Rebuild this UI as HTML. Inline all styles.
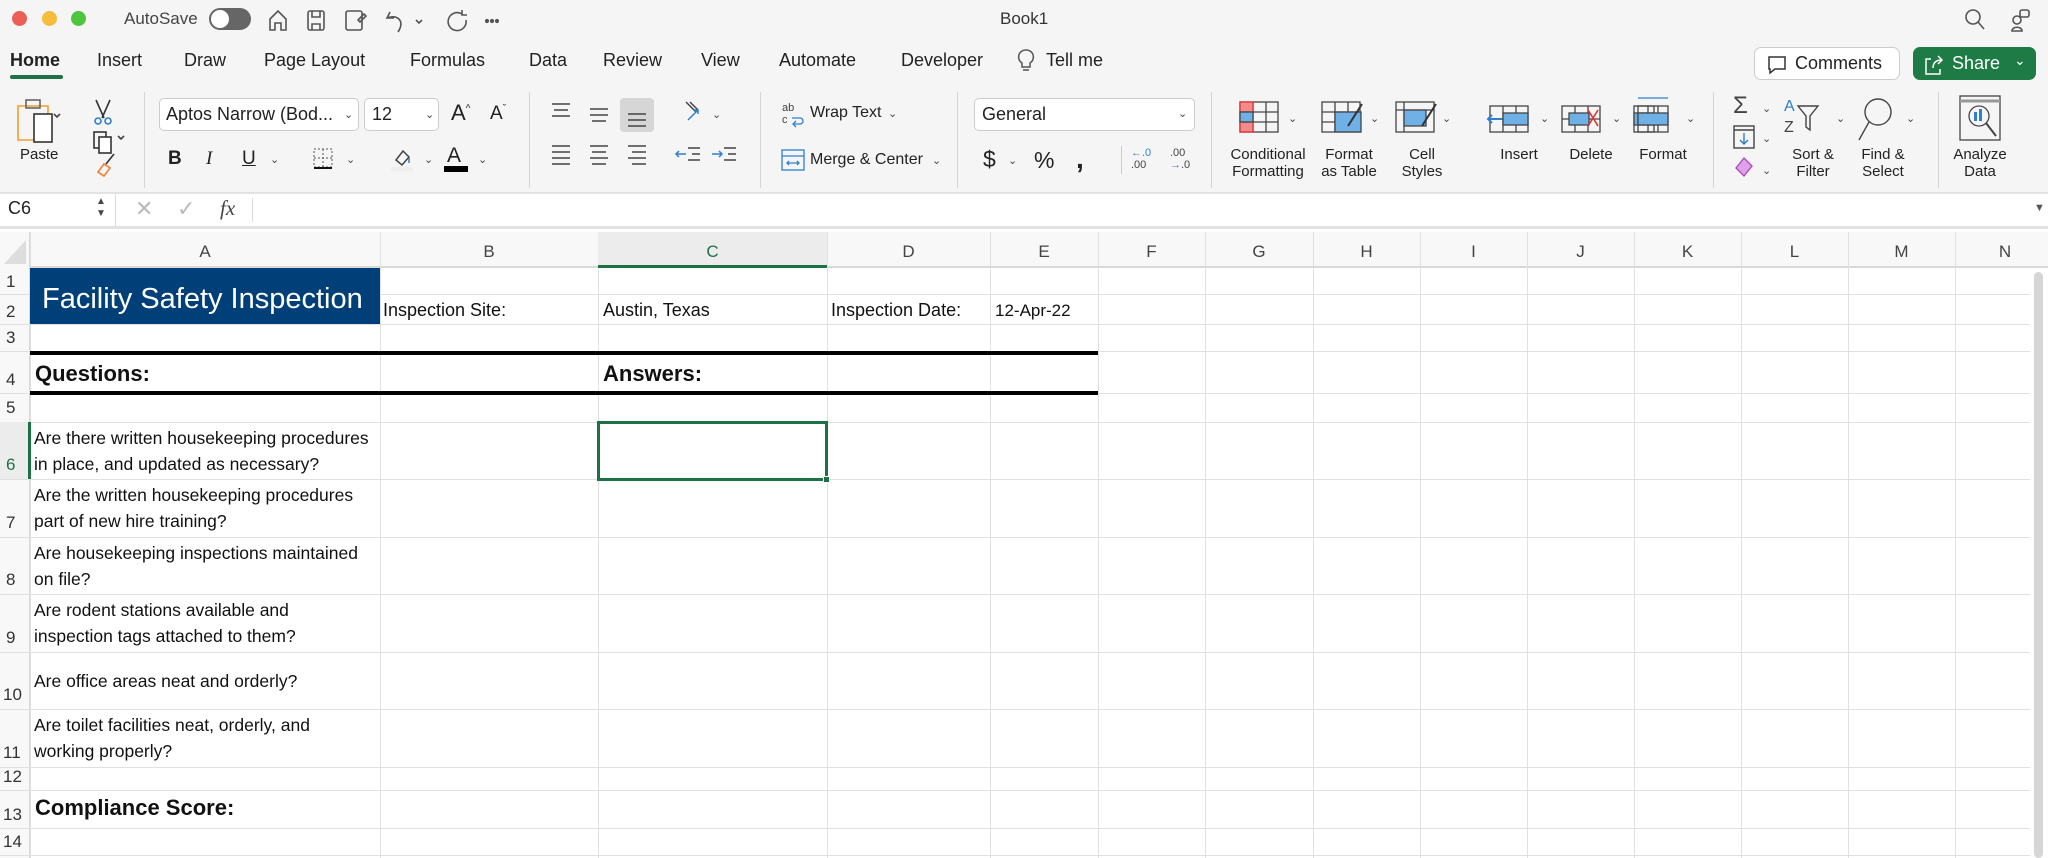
<!DOCTYPE html>
<html><head><meta charset="utf-8">
<style>
*{box-sizing:border-box;margin:0;padding:0}
body{width:2048px;height:858px;overflow:hidden;background:#f5f5f5;font-family:"Liberation Sans",sans-serif;color:#222;position:relative}
.a{position:absolute;white-space:nowrap}
.n{font-family:"Liberation Sans Narrow","Liberation Sans",sans-serif}
.t{font-size:17px;color:#222}
.lbl{font-size:15px;text-align:center;line-height:17px;color:#222}
.sep{position:absolute;width:1px;background:#d4d4d4;top:92px;height:96px}
.cv{font-size:11px;color:#444}
.gl{position:absolute;background:#e0e0e0}
.cell{position:absolute;font-size:18px;color:#111;white-space:nowrap}
.rh{position:absolute;left:6px;font-size:17px;color:#333}
.ch{position:absolute;top:242px;font-size:17px;color:#444;text-align:center}
</style></head><body>
<div class="a" style="left:12px;top:11px;width:15px;height:15px;border-radius:50%;background:#ec5f57"></div>
<div class="a" style="left:42px;top:11px;width:15px;height:15px;border-radius:50%;background:#f4bd3c"></div>
<div class="a" style="left:71px;top:11px;width:15px;height:15px;border-radius:50%;background:#4fc43f"></div>
<div class="a t" style="left:124px;top:9px;font-size:17px;color:#444">AutoSave</div>
<div class="a" style="left:209px;top:8px;width:42px;height:22px;border-radius:11px;background:#666"><div style="position:absolute;left:2px;top:2px;width:18px;height:18px;border-radius:50%;background:#fff"></div></div>
<svg class="a" style="left:266px;top:6px" width="250" height="28" fill="none" stroke="#555" stroke-width="1.6">
<path d="M4 13 L12 5 L20 13 V24 H15 V17 H9 V24 H4 Z"/>
<rect x="42" y="5" width="16" height="19" rx="2"/><path d="M46 5v6h8V5 M46 24v-6h8v6"/>
<rect x="80" y="5" width="16" height="19" rx="2"/><path d="M92 14l6-6 2 2-6 6z"/>
<path d="M124 6 L121 12 L128 12 M121 12 C130 8 140 14 132 26"/><path d="M150 14l3 3 3-3"/>
<path d="M196 8 A9 9 0 1 0 200 14 M196 4v5h5"/>
<circle cx="221" cy="15" r="1.3" fill="#555"/><circle cx="226" cy="15" r="1.3" fill="#555"/><circle cx="231" cy="15" r="1.3" fill="#555"/>
</svg>
<div class="a" style="left:1000px;top:9px;font-size:17px;color:#333">Book1</div>
<svg class="a" style="left:1962px;top:6px" width="80" height="28" fill="none" stroke="#555" stroke-width="1.6"><circle cx="11" cy="11" r="7"/><path d="M16 16l6 7"/><circle cx="55" cy="14" r="4"/><path d="M50 25c0-5 10-5 10 0z"/><rect x="58" y="4" width="9" height="7" rx="2"/></svg>
<div class="a" style="top:50px;left:10px;font-size:18px;font-weight:bold;color:#222">Home</div>
<div class="a" style="left:10px;top:75px;width:53px;height:4px;border-radius:2px;background:#1e7145"></div>
<div class="a" style="top:50px;left:97px;font-size:18px">Insert</div>
<div class="a" style="top:50px;left:184px;font-size:18px">Draw</div>
<div class="a" style="top:50px;left:264px;font-size:18px">Page Layout</div>
<div class="a" style="top:50px;left:410px;font-size:18px">Formulas</div>
<div class="a" style="top:50px;left:529px;font-size:18px">Data</div>
<div class="a" style="top:50px;left:603px;font-size:18px">Review</div>
<div class="a" style="top:50px;left:701px;font-size:18px">View</div>
<div class="a" style="top:50px;left:779px;font-size:18px">Automate</div>
<div class="a" style="top:50px;left:901px;font-size:18px">Developer</div>
<svg class="a" style="left:1016px;top:48px" width="20" height="26" fill="none" stroke="#555" stroke-width="1.5"><path d="M10 2a7 7 0 0 0-4 13v4h8v-4a7 7 0 0 0-4-13z M7 22h6"/></svg>
<div class="a" style="top:50px;left:1046px;font-size:18px">Tell me</div>
<div class="a" style="left:1754px;top:47px;width:146px;height:33px;border:1px solid #ccc;border-radius:7px;background:#fff"></div>
<svg class="a" style="left:1766px;top:54px" width="22" height="22" fill="none" stroke="#333" stroke-width="1.5"><path d="M3 3h16v12H9l-5 4v-4H3z"/></svg>
<div class="a" style="left:1795px;top:53px;font-size:18px;color:#222">Comments</div>
<div class="a" style="left:1913px;top:47px;width:123px;height:33px;border-radius:7px;background:#1e7b45"></div>
<svg class="a" style="left:1923px;top:54px" width="22" height="22" fill="none" stroke="#fff" stroke-width="1.5"><path d="M8 5H3v15h14v-5 M10 14c0-6 4-8 9-8 M15 2l4 4-4 4"/></svg>
<div class="a" style="left:1952px;top:53px;font-size:18px;color:#fff">Share</div>
<div class="a" style="left:2014px;top:52px;font-size:14px;color:#fff">&#8964;</div>
<svg class="a" style="left:14px;top:96px" width="120" height="82" fill="none" stroke-width="1.6">
<path d="M4 10h30v34H4z" stroke="#f0a030"/><rect x="12" y="4" width="14" height="8" stroke="#666"/><rect x="20" y="18" width="18" height="28" fill="#fff" stroke="#333"/>
<path d="M40 18l3 3 3-3" stroke="#444"/>
<path d="M82 4l8 18 M96 4l-8 18" stroke="#333"/><circle cx="84" cy="25" r="3" stroke="#2f7fd0"/><circle cx="94" cy="25" r="3" stroke="#2f7fd0"/>
<rect x="80" y="36" width="12" height="16" stroke="#333"/><rect x="85" y="41" width="12" height="16" fill="#fff" stroke="#333"/><path d="M104 40l3 3 3-3" stroke="#444"/>
<path d="M84 76l6-8 6 4-6 8z" stroke="#f08030"/><path d="M92 68l8-10" stroke="#333"/>
</svg>
<div class="a lbl" style="left:20px;top:146px">Paste</div>
<div class="sep" style="left:144px"></div>
<div class="a" style="left:159px;top:98px;width:200px;height:33px;background:#fff;border:1px solid #ccc;border-radius:5px"></div>
<div class="a" style="left:166px;top:104px;font-size:18px">Aptos Narrow (Bod...</div>
<div class="a cv" style="left:344px;top:108px">&#8964;</div>
<div class="a" style="left:364px;top:98px;width:75px;height:33px;background:#fff;border:1px solid #ccc;border-radius:5px"></div>
<div class="a" style="left:372px;top:104px;font-size:18px">12</div>
<div class="a cv" style="left:425px;top:108px">&#8964;</div>
<div class="a" style="left:451px;top:100px;font-size:22px">A<sup style="font-size:10px">^</sup></div>
<div class="a" style="left:490px;top:103px;font-size:19px">A<sup style="font-size:10px">&#711;</sup></div>
<div class="a" style="left:168px;top:148px;font-size:19px;font-weight:bold">B</div>
<div class="a" style="left:206px;top:148px;font-size:19px;font-style:italic;font-family:'Liberation Serif',serif">I</div>
<div class="a" style="left:242px;top:148px;font-size:19px;text-decoration:underline">U</div>
<div class="a cv" style="left:270px;top:153px">&#8964;</div>
<svg class="a" style="left:312px;top:147px" width="22" height="24" fill="none" stroke="#555" stroke-dasharray="2 2"><rect x="2" y="2" width="18" height="18"/><path d="M11 2v18M2 11h18"/><path d="M2 21h18" stroke="#111" stroke-dasharray="none" stroke-width="2"/></svg>
<div class="a cv" style="left:346px;top:153px">&#8964;</div>
<svg class="a" style="left:390px;top:146px" width="24" height="26" fill="none" stroke="#444" stroke-width="1.5"><path d="M6 14l7-9 6 6-7 8z"/><path d="M19 12v5" stroke="#2f7fd0"/><rect x="1" y="21" width="22" height="4" fill="#eee" stroke="none"/></svg>
<div class="a cv" style="left:424px;top:153px">&#8964;</div>
<div class="a" style="left:447px;top:144px;font-size:21px">A</div>
<div class="a" style="left:444px;top:166px;width:24px;height:6px;background:#000"></div>
<div class="a cv" style="left:478px;top:153px">&#8964;</div>
<div class="sep" style="left:529px"></div>
<svg class="a" style="left:548px;top:98px" width="200" height="80" fill="none" stroke="#444" stroke-width="1.5">
<rect x="72" y="0" width="34" height="34" rx="4" fill="#d6d6d6" stroke="none"/>
<path d="M4 6h18M6 12h14M4 18h18"/><path d="M42 11h18M42 17h18M44 23h14"/><path d="M80 16h18M80 22h18M80 28h18"/>
<path d="M4 48h18M4 54h18M4 60h18M4 66h18"/><path d="M42 48h18M44 54h14M42 60h18M44 66h14"/><path d="M80 48h18M84 54h14M80 60h18M84 66h14"/>
<path d="M140 50h12M144 56h8M140 62h12" /><path d="M128 56h10M131 53l-3 3 3 3" stroke="#2f7fd0"/>
<path d="M176 50h12M180 56h8M176 62h12"/><path d="M164 56h10M171 53l3 3-3 3" stroke="#2f7fd0"/>
<path d="M138 4l10 10M142 4l8 8" /><path d="M140 22l10-10M146 12h4v4" stroke="#2f7fd0"/>
</svg>
<div class="a cv" style="left:712px;top:108px">&#8964;</div>
<div class="sep" style="left:760px"></div>
<svg class="a" style="left:780px;top:100px" width="28" height="80" fill="none" stroke="#444" stroke-width="1.3"><text x="2" y="11" font-size="11" fill="#444" stroke="none" font-family="Liberation Sans">ab</text><text x="2" y="23" font-size="11" fill="#444" stroke="none" font-family="Liberation Sans">c</text><path d="M12 18h8a3 3 0 0 1 0 6h-6M16 21l-3 3 3 3" stroke="#2f7fd0"/>
<rect x="2" y="50" width="22" height="20" stroke="#2f7fd0"/><path d="M2 56h22M8 63h10M9 61l-2 2 2 2M17 61l2 2-2 2" stroke="#2f7fd0"/></svg>
<div class="a" style="left:810px;top:104px;font-size:16px">Wrap Text</div>
<div class="a cv" style="left:888px;top:107px">&#8964;</div>
<div class="a" style="left:810px;top:151px;font-size:16px">Merge &amp; Center</div>
<div class="a cv" style="left:932px;top:154px">&#8964;</div>
<div class="sep" style="left:957px"></div>
<div class="a" style="left:974px;top:98px;width:221px;height:33px;background:#fff;border:1px solid #ccc;border-radius:5px"></div>
<div class="a" style="left:982px;top:104px;font-size:18px">General</div>
<div class="a cv" style="left:1178px;top:107px">&#8964;</div>
<div class="a" style="left:983px;top:146px;font-size:23px">$</div>
<div class="a cv" style="left:1008px;top:154px">&#8964;</div>
<div class="a" style="left:1034px;top:147px;font-size:23px">%</div>
<div class="a" style="left:1076px;top:143px;font-size:28px;font-weight:bold">,</div>
<div class="a" style="left:1121px;top:146px;width:1px;height:28px;background:#ccc"></div>
<div class="a" style="left:1131px;top:147px;font-size:11px;line-height:12px;color:#2f7fd0">&larr;.0<br><span style="color:#444">.00</span></div>
<div class="a" style="left:1170px;top:147px;font-size:11px;line-height:12px;color:#444">.00<br><span style="color:#2f7fd0">&rarr;</span>.0</div>
<div class="sep" style="left:1211px"></div>
<svg class="a" style="left:1236px;top:100px" width="420" height="36" fill="none" stroke="#444" stroke-width="1.3">
<rect x="4" y="2" width="38" height="30"/><path d="M4 12h38M4 22h38M17 2v30M30 2v30"/><rect x="4" y="2" width="13" height="10" fill="#f28b8b" stroke="#e03030"/><rect x="4" y="22" width="13" height="10" fill="#f28b8b" stroke="#e03030"/><rect x="4" y="12" width="13" height="10" fill="#6fb0e6"/>
<rect x="86" y="2" width="38" height="30"/><path d="M86 12h38M86 22h38M99 2v30M112 2v30"/><rect x="99" y="12" width="26" height="20" fill="#6fb0e6"/><path d="M126 4l-14 22" stroke="#333" stroke-width="2"/>
<rect x="160" y="2" width="38" height="30"/><path d="M160 10h38M168 2v30"/><rect x="168" y="10" width="22" height="16" fill="#6fb0e6"/><path d="M200 4l-14 22" stroke="#333" stroke-width="2"/>
<rect x="254" y="6" width="38" height="26"/><path d="M254 19h38M267 6v26M280 6v26"/><rect x="267" y="13" width="25" height="12" fill="#6fb0e6"/><path d="M266 19h-14M256 15l-4 4 4 4" stroke="#2f7fd0" stroke-width="2"/>
<rect x="326" y="6" width="38" height="26"/><path d="M326 19h38M339 6v26M352 6v26"/><rect x="333" y="13" width="20" height="12" fill="#6fb0e6"/><path d="M352 10l10 16M362 10l-10 16" stroke="#e03030" stroke-width="1.6"/>
<rect x="398" y="6" width="20" height="26"/><path d="M398 19h20"/><rect x="398" y="13" width="20" height="12" fill="#6fb0e6"/>
</svg>
<svg class="a" style="left:1634px;top:96px" width="40" height="40" fill="none" stroke="#444" stroke-width="1.3"><path d="M4 2h30" stroke="#2f7fd0"/><rect x="4" y="10" width="30" height="26"/><path d="M4 23h30M14 10v26M24 10v26"/><rect x="4" y="17" width="30" height="12" fill="#6fb0e6"/></svg>
<div class="a cv" style="left:1288px;top:112px">&#8964;</div>
<div class="a cv" style="left:1370px;top:112px">&#8964;</div>
<div class="a cv" style="left:1442px;top:112px">&#8964;</div>
<div class="a cv" style="left:1540px;top:112px">&#8964;</div>
<div class="a cv" style="left:1612px;top:112px">&#8964;</div>
<div class="a cv" style="left:1686px;top:112px">&#8964;</div>
<div class="a lbl" style="left:1218px;top:146px;width:100px">Conditional<br>Formatting</div>
<div class="a lbl" style="left:1309px;top:146px;width:80px">Format<br>as Table</div>
<div class="a lbl" style="left:1382px;top:146px;width:80px">Cell<br>Styles</div>
<div class="a lbl" style="left:1484px;top:146px;width:70px">Insert</div>
<div class="a lbl" style="left:1556px;top:146px;width:70px">Delete</div>
<div class="a lbl" style="left:1628px;top:146px;width:70px">Format</div>
<div class="sep" style="left:1713px"></div>
<div class="a" style="left:1733px;top:92px;font-size:24px;color:#444">&Sigma;</div>
<div class="a cv" style="left:1762px;top:102px">&#8964;</div>
<svg class="a" style="left:1732px;top:124px" width="26" height="60" fill="none" stroke-width="1.4"><rect x="2" y="2" width="20" height="22" stroke="#444"/><path d="M2 6h20" stroke="#444"/><path d="M12 9v11M8 16l4 4 4-4" stroke="#2f7fd0"/><path d="M4 44l8-10 8 8-8 10z" stroke="#b04cc0" fill="#e0a0ea"/></svg>
<div class="a cv" style="left:1762px;top:132px">&#8964;</div>
<div class="a cv" style="left:1762px;top:164px">&#8964;</div>
<svg class="a" style="left:1782px;top:96px" width="200" height="46" fill="none" stroke="#444" stroke-width="1.4"><text x="2" y="15" font-size="16" fill="#2f7fd0" stroke="none" font-family="Liberation Sans">A</text><text x="2" y="36" font-size="16" fill="#444" stroke="none" font-family="Liberation Sans">Z</text><path d="M16 10h20l-8 10v14l-4-3V20z"/><circle cx="96" cy="16" r="13"/><path d="M87 26l-10 18"/></svg>
<div class="a cv" style="left:1836px;top:112px">&#8964;</div>
<div class="a cv" style="left:1906px;top:112px">&#8964;</div>
<div class="a lbl" style="left:1773px;top:146px;width:80px">Sort &amp;<br>Filter</div>
<div class="a lbl" style="left:1843px;top:146px;width:80px">Find &amp;<br>Select</div>
<div class="sep" style="left:1938px"></div>
<svg class="a" style="left:1958px;top:94px" width="46" height="48" fill="none" stroke="#444" stroke-width="1.3"><rect x="2" y="2" width="40" height="44"/><path d="M2 7h40" stroke-width="3" stroke="#999"/><circle cx="21" cy="22" r="10"/><path d="M28 29l10 13" stroke-width="2"/><rect x="16" y="18" width="3" height="9" fill="#2f7fd0" stroke="none"/><rect x="21" y="15" width="3" height="12" fill="#2f7fd0" stroke="none"/></svg>
<div class="a lbl" style="left:1940px;top:146px;width:80px">Analyze<br>Data</div>
<div class="a" style="left:0;top:192px;width:2048px;height:37px;background:#fff;border-top:2px solid #e2e2e2;border-bottom:3px solid #e2e2e2"></div>
<div class="a" style="left:115px;top:194px;width:1px;height:32px;background:#ddd"></div>
<div class="a" style="left:8px;top:198px;font-size:18px">C6</div>
<div class="a" style="left:96px;top:196px;font-size:10px;line-height:12px;color:#444">&#9650;<br>&#9660;</div>
<div class="a" style="left:135px;top:196px;font-size:22px;color:#bbb">&#10005;</div>
<div class="a" style="left:177px;top:196px;font-size:22px;color:#bbb">&#10003;</div>
<div class="a" style="left:220px;top:196px;font-size:21px;font-style:italic;font-family:'Liberation Serif',serif;color:#444">fx</div>
<div class="a" style="left:252px;top:198px;width:1px;height:24px;background:#ddd"></div>
<div class="a" style="left:2034px;top:202px;font-size:11px;color:#555">&#9660;</div>
<div class="a" style="left:0;top:229px;width:2048px;height:629px;background:#fff"></div>
<div class="a" style="left:0;top:232px;width:2048px;height:36px;background:#f8f8f8;border-bottom:2px solid #d8d8d8"></div>
<div class="a" style="left:0;top:232px;width:30px;height:626px;background:#f8f8f8;border-right:1px solid #d8d8d8"></div>
<svg class="a" style="left:2px;top:238px" width="26" height="28"><path d="M24 2V26H2z" fill="#ddd"/></svg>
<div id="g"></div>
<div class="ch" style="left:30px;width:350px">A</div>
<div class="ch" style="left:380px;width:218px">B</div>
<div class="a" style="left:598px;top:232px;width:229px;height:36px;background:#ececec;border-bottom:3px solid #1e7145"></div>
<div class="ch" style="left:598px;width:229px;color:#1e7145">C</div>
<div class="ch" style="left:827px;width:163px">D</div>
<div class="ch" style="left:990px;width:108px">E</div>
<div class="ch" style="left:1098px;width:107px">F</div>
<div class="ch" style="left:1205px;width:108px">G</div>
<div class="ch" style="left:1313px;width:107px">H</div>
<div class="ch" style="left:1420px;width:107px">I</div>
<div class="ch" style="left:1527px;width:107px">J</div>
<div class="ch" style="left:1634px;width:107px">K</div>
<div class="ch" style="left:1741px;width:107px">L</div>
<div class="ch" style="left:1848px;width:107px">M</div>
<div class="ch" style="left:1955px;width:100px">N</div>
<div class="a" style="left:2034px;top:272px;width:9px;height:586px;border-radius:5px;background:#d6d6d6"></div>
<div class="rh" style="top:272px">1</div>
<div class="rh" style="top:302px">2</div>
<div class="rh" style="top:328px">3</div>
<div class="rh" style="top:370px">4</div>
<div class="rh" style="top:398px">5</div>
<div class="a" style="left:0;top:422px;width:30px;height:57px;background:#ececec"></div>
<div class="rh" style="top:455px;color:#1e7145">6</div>
<div class="rh" style="top:513px">7</div>
<div class="rh" style="top:570px">8</div>
<div class="rh" style="top:628px">9</div>
<div class="rh" style="left:3px;top:685px">10</div>
<div class="rh" style="left:3px;top:743px">11</div>
<div class="rh" style="left:3px;top:767px">12</div>
<div class="rh" style="left:3px;top:805px">13</div>
<div class="rh" style="left:3px;top:832px">14</div>
<div class="a" style="left:28px;top:422px;width:3px;height:57px;background:#1e7145"></div>
<div class="a n" style="left:30px;top:268px;width:350px;height:56px;background:#003f78;color:#fff;font-size:29px;padding:16px 0 0 12px;line-height:30px">Facility Safety Inspection</div>
<div class="cell n" style="left:383px;top:300px">Inspection Site:</div>
<div class="cell n" style="left:603px;top:300px">Austin, Texas</div>
<div class="cell n" style="left:831px;top:300px">Inspection Date:</div>
<div class="cell n" style="left:995px;top:301px;font-size:17px">12-Apr-22</div>
<div class="a" style="left:30px;top:351px;width:1068px;height:4px;background:#000"></div>
<div class="a" style="left:30px;top:391px;width:1068px;height:4px;background:#000"></div>
<div class="cell n" style="left:35px;top:361px;font-size:22px;font-weight:bold">Questions:</div>
<div class="cell n" style="left:603px;top:361px;font-size:22px;font-weight:bold">Answers:</div>
<div class="cell n" style="left:34px;top:425px;line-height:26px;font-size:17.5px">Are there written housekeeping procedures<br>in place, and updated as necessary?</div>
<div class="cell n" style="left:34px;top:482px;line-height:26px;font-size:17.5px">Are the written housekeeping procedures<br>part of new hire training?</div>
<div class="cell n" style="left:34px;top:540px;line-height:26px;font-size:17.5px">Are housekeeping inspections maintained<br>on file?</div>
<div class="cell n" style="left:34px;top:597px;line-height:26px;font-size:17.5px">Are rodent stations available and<br>inspection tags attached to them?</div>
<div class="cell n" style="left:34px;top:668px;line-height:26px;font-size:17.5px">Are office areas neat and orderly?</div>
<div class="cell n" style="left:34px;top:712px;line-height:26px;font-size:17.5px">Are toilet facilities neat, orderly, and<br>working properly?</div>
<div class="cell n" style="left:35px;top:795px;font-size:22px;font-weight:bold">Compliance Score:</div>
<div class="a" style="left:597px;top:421px;width:231px;height:60px;border:3px solid #1e7145"></div>
<div class="a" style="left:823px;top:476px;width:7px;height:7px;background:#1e7145;border:1px solid #fff"></div>
<script>
var g=document.getElementById('g'),h='';
var cols=[30,380,598,827,990,1098,1205,1313,1420,1527,1634,1741,1848,1955];
var rows=[294,324,351,393,422,479,537,594,652,709,767,790,828,855];
cols.forEach(function(x){h+='<div class="gl" style="left:'+x+'px;top:232px;width:1px;height:626px"></div>';});
rows.forEach(function(y){h+='<div class="gl" style="left:0;top:'+y+'px;width:2030px;height:1px"></div>';});
g.innerHTML=h;
</script>
</body></html>
